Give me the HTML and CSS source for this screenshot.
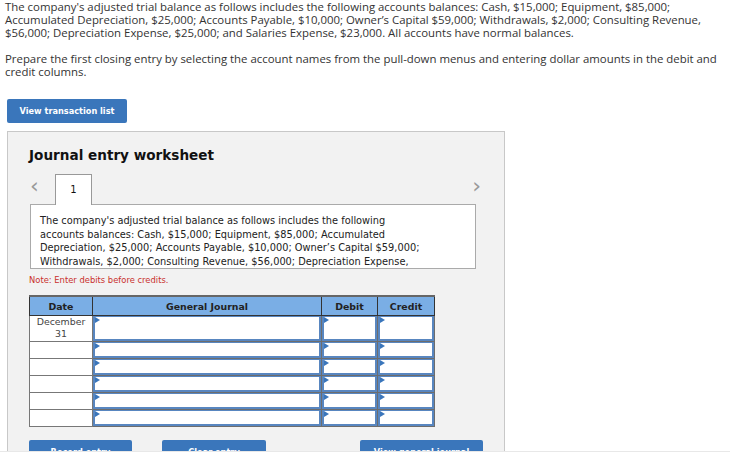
FILE: index.html
```html
<!DOCTYPE html>
<html lang="en">
<head>
    <meta charset="UTF-8">
    <title>Journal entry worksheet</title>
    <link rel="stylesheet" href="styles.css">
</head>
<body>
    <div class="page">
        <p class="question">The company's adjusted trial balance as follows includes the following accounts balances: Cash, $15,000; Equipment, $85,000; Accumulated Depreciation, $25,000; Accounts Payable, $10,000; Owner’s Capital $59,000; Withdrawals, $2,000; Consulting Revenue, $56,000; Depreciation Expense, $25,000; and Salaries Expense, $23,000. All accounts have normal balances.</p>
        <p class="question instructions">Prepare the first closing entry by selecting the account names from the pull-down menus and entering dollar amounts in the debit and credit columns.</p>

        <button class="btn btn-list">View transaction list</button>

        <div class="worksheet">
            <h2 class="worksheet-title">Journal entry worksheet</h2>

            <div class="tabs">
                <span class="arrow arrow-left">&lsaquo;</span>
                <span class="tab">1</span>
                <span class="arrow arrow-right">&rsaquo;</span>
            </div>

            <div class="entry-text">
                The company's adjusted trial balance as follows includes the following accounts balances: Cash, $15,000; Equipment, $85,000; Accumulated Depreciation, $25,000; Accounts Payable, $10,000; Owner’s Capital $59,000; Withdrawals, $2,000; Consulting Revenue, $56,000; Depreciation Expense, $25,000; and Salaries Expense, $23,000. All accounts have normal balances.
            </div>

            <p class="note">Note: Enter debits before credits.</p>

            <table class="journal">
                <thead>
                    <tr>
                        <th class="col-date">Date</th>
                        <th class="col-account">General Journal</th>
                        <th class="col-debit">Debit</th>
                        <th class="col-credit">Credit</th>
                    </tr>
                </thead>
                <tbody>
                    <tr class="row-first">
                        <td class="date">December<br>31</td>
                        <td class="input"><div class="field"></div></td>
                        <td class="input"><div class="field"></div></td>
                        <td class="input"><div class="field"></div></td>
                    </tr>
                    <tr>
                        <td class="date"></td>
                        <td class="input"><div class="field"></div></td>
                        <td class="input"><div class="field"></div></td>
                        <td class="input"><div class="field"></div></td>
                    </tr>
                    <tr>
                        <td class="date"></td>
                        <td class="input"><div class="field"></div></td>
                        <td class="input"><div class="field"></div></td>
                        <td class="input"><div class="field"></div></td>
                    </tr>
                    <tr>
                        <td class="date"></td>
                        <td class="input"><div class="field"></div></td>
                        <td class="input"><div class="field"></div></td>
                        <td class="input"><div class="field"></div></td>
                    </tr>
                    <tr>
                        <td class="date"></td>
                        <td class="input"><div class="field"></div></td>
                        <td class="input"><div class="field"></div></td>
                        <td class="input"><div class="field"></div></td>
                    </tr>
                    <tr>
                        <td class="date"></td>
                        <td class="input"><div class="field"></div></td>
                        <td class="input"><div class="field"></div></td>
                        <td class="input"><div class="field"></div></td>
                    </tr>
                </tbody>
            </table>

            <div class="actions">
                <button class="btn btn-record">Record entry</button>
                <button class="btn btn-clear">Clear entry</button>
                <button class="btn btn-view">View general journal</button>
            </div>
        </div>
    </div>
</body>
</html>
```

FILE: styles.css
```css
html, body {
    margin: 0;
    padding: 0;
    background-color: #fff;
}

.page {
    height: 451px;
    overflow: hidden;
    border-bottom: 1px solid #e8e8e8;
    padding-left: 5px;
    font-family: 'Open Sans', Arial, sans-serif;
    color: #333;
}

.question {
    margin: 0;
    width: 712px;
    font-size: 11.4px;
    line-height: 13px;
}

.instructions {
    margin-top: 13px;
}

.btn {
    border: none;
    border-radius: 2px;
    background-color: #3a76bb;
    color: #fff;
    font-family: 'DejaVu Sans', Verdana, sans-serif;
    font-weight: bold;
    font-size: 8.2px;
    padding: 0;
    cursor: pointer;
}

.btn-list {
    display: block;
    margin: 21px 0 0 2px;
    width: 120px;
    height: 24px;
}

.worksheet {
    margin: 8px 0 0 2px;
    width: 454px;
    padding: 14px 21px 0 21px;
    background-color: #f2f2f2;
    border: 1px solid #c8c8c8;
    height: 400px;
    font-family: 'DejaVu Sans', Verdana, sans-serif;
}

.worksheet-title {
    margin: 0;
    font-size: 13.6px;
    line-height: 18px;
    font-weight: bold;
    color: #111;
}

.tabs {
    display: flex;
    align-items: center;
    margin-top: 10px;
    width: 452px;
    height: 31px;
}

.arrow {
    font-size: 22px;
    color: #999;
    line-height: 20px;
    margin-top: -8px;
}

.arrow-left {
    margin-left: 1px;
    width: 25px;
}

.arrow-right {
    margin-left: auto;
}

.tab {
    width: 37px;
    height: 31px;
    box-sizing: border-box;
    border: 1px solid #999;
    border-bottom: none;
    background-color: #fff;
    text-align: center;
    font-size: 10px;
    line-height: 30px;
    color: #111;
    position: relative;
    z-index: 1;
}

.entry-text {
    margin-top: -1px;
    margin-left: 1px;
    width: 385px;
    height: 54px;
    padding: 9px 50px 0 9px;
    background-color: #fff;
    border: 1px solid #aaa;
    font-size: 9.8px;
    line-height: 13.6px;
    color: #222;
    overflow: hidden;
}

.note {
    margin: 6px 0 0 0;
    font-size: 8.4px;
    line-height: 11px;
    color: #c9302c;
}

.journal {
    margin-top: 9px;
    border-collapse: collapse;
    font-size: 9.4px;
}

.journal th {
    background-color: #7aaee5;
    color: #222;
    font-weight: bold;
    height: 18px;
    padding: 0;
    border: 1px solid #333;
    border-top: 2px solid #666;
}

.col-date { width: 62px; }
.col-account { width: 228px; }
.col-debit { width: 55px; }
.col-credit { width: 56px; }

.journal td {
    padding: 0;
    border: 1px solid #777;
    height: 16px;
    vertical-align: top;
}

.journal .row-first td {
    height: 25px;
}

.journal td.date {
    background-color: #fff;
    text-align: center;
    color: #444;
    line-height: 12px;
}

.journal td.input {
    border-color: #6d6d6d;
    background-color: #6d8fb8;
}

.field {
    position: relative;
    box-sizing: border-box;
    height: 16px;
    border: 2px solid #5886c0;
    border-top-width: 1px;
    background-color: #fff;
}

.row-first .field {
    height: 25px;
}

/* small marker for the pull-down / input fields */
.field::before {
    content: '';
    position: absolute;
    top: 0;
    left: 0;
    border-top: 3px solid transparent;
    border-bottom: 3px solid transparent;
    border-left: 5px solid #3a76bb;
}

.actions {
    display: flex;
    margin-top: 13px;
}

.btn-record {
    width: 103px;
    height: 24px;
}

.btn-clear {
    width: 104px;
    height: 24px;
    margin-left: 30px;
}

.btn-view {
    width: 123px;
    height: 24px;
    margin-left: 94px;
}
```
